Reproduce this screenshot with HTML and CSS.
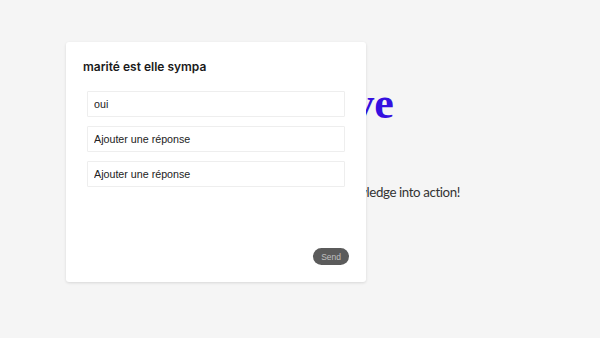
FILE: index.html
```html
<!DOCTYPE html>
<html lang="fr">
<head>
  <meta charset="UTF-8" />
  <title>Sondage</title>
  <meta name="viewport" content="width=device-width, initial-scale=1.0" />
  <link rel="stylesheet" href="styles.css">
</head>
<body>

  <!-- Hero behind the modal -->
  <section class="hero">
    <h1 class="hero-title">Active</h1>
    <p class="hero-text">Put your knowledge into action!</p>
  </section>

  <!-- Poll modal -->
  <div class="poll-card">
    <h2 class="poll-question">marité est elle sympa</h2>
    <div class="poll-answers">
      <input class="poll-input" type="text" value="oui">
      <input class="poll-input" type="text" placeholder="Ajouter une réponse">
      <input class="poll-input" type="text" placeholder="Ajouter une réponse">
    </div>
    <div class="poll-footer">
      <button class="send-button">Send</button>
    </div>
  </div>

</body>
</html>
```

FILE: styles.css
```css
:root {
  --bg: #f5f5f5;
  --blue: #3510e0;
  --text: #333;
  --btn: #5b5b5b;
}

body {
  margin: 0;
  background-color: var(--bg);
  font-family: 'Lato', sans-serif;
  color: var(--text);
}

.hero {
  padding: 78px 0 0 274px;
}

.hero-title {
  margin: 0;
  font-family: 'Liberation Serif', serif;
  font-weight: bold;
  font-size: 44px;
  line-height: 52px;
  color: var(--blue);
}

.hero-text {
  margin: 54px 0 0;
  padding-left: 13px;
  font-size: 13.3px;
  letter-spacing: -0.4px;
}

.poll-card {
  position: absolute;
  top: 42px;
  left: 66px;
  width: 300px;
  height: 240px;
  box-sizing: border-box;
  padding: 16px 17px 17px;
  background-color: white;
  border-radius: 3px;
  box-shadow: 0 1px 3px rgba(0, 0, 0, 0.12);
  display: flex;
  flex-direction: column;
}

.poll-question {
  margin: 0;
  font-family: 'Inter', sans-serif;
  font-weight: 600;
  font-size: 12px;
  line-height: 18px;
  color: #1a1a1a;
}

.poll-answers {
  display: flex;
  flex-direction: column;
  gap: 9px;
  margin: 15px 4px 0;
}

.poll-input {
  height: 26px;
  box-sizing: border-box;
  padding: 0 6px;
  border: 1px solid #eee;
  border-radius: 1px;
  font-family: 'Liberation Sans', Arial, sans-serif;
  font-size: 10.7px;
  color: #222;
  outline: none;
}

.poll-input::placeholder {
  color: #222;
}

.poll-footer {
  margin-top: auto;
  display: flex;
  justify-content: flex-end;
}

.send-button {
  padding: 0 8px;
  height: 17px;
  border: none;
  border-radius: 9px;
  background-color: var(--btn);
  color: #c0c0c0;
  font-family: 'Liberation Sans', Arial, sans-serif;
  font-size: 8.5px;
  cursor: pointer;
}
```
